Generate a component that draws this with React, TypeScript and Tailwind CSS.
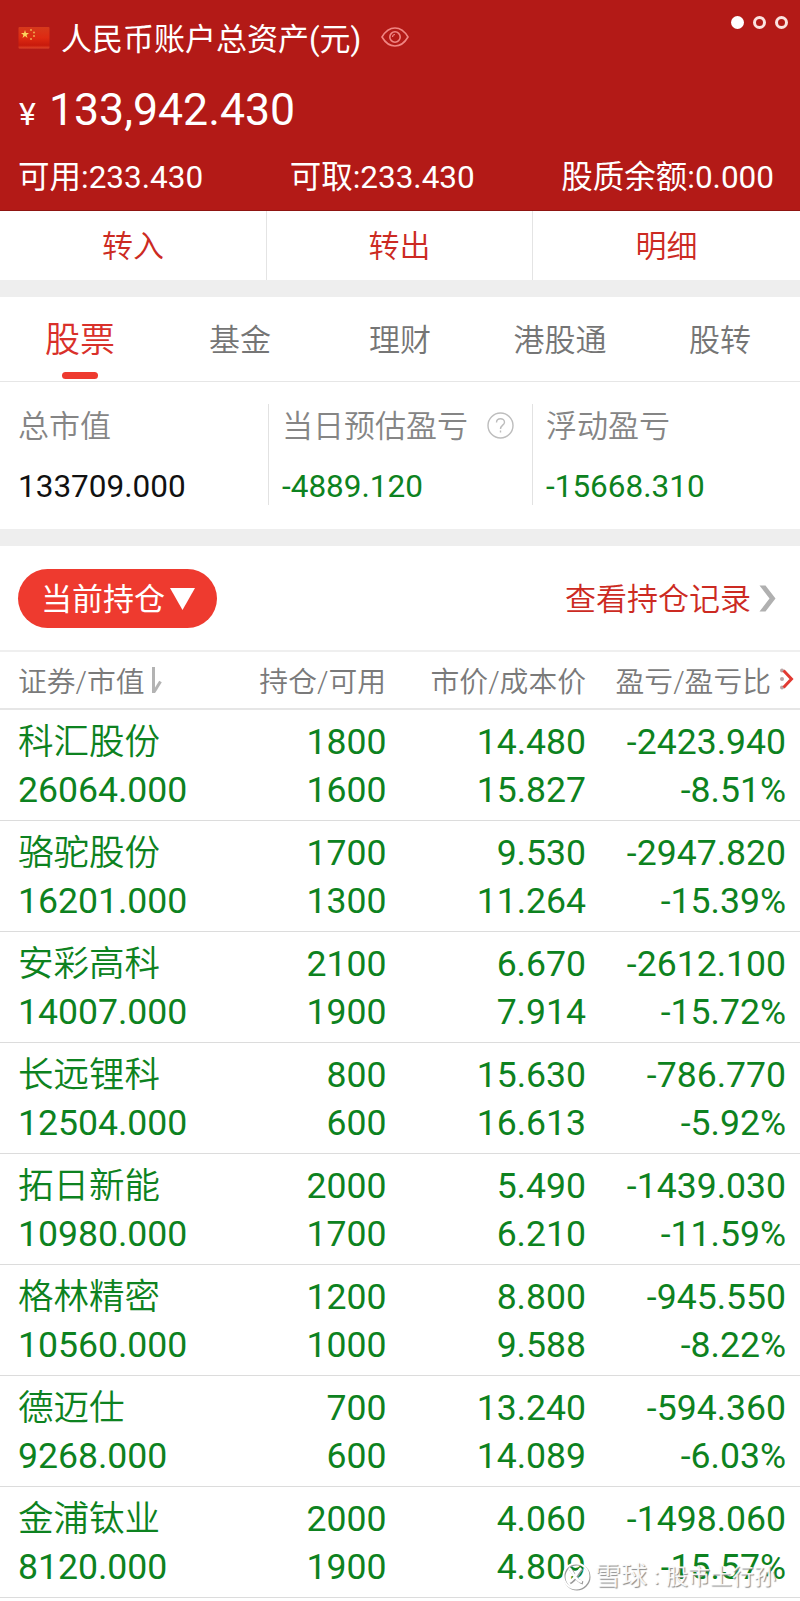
import React from "react";

const HOLDINGS = [
  { name: "科汇股份", value: "26064.000", qty: "1800", usable: "1600", price: "14.480", cost: "15.827", profit: "-2423.940", ratio: "-8.51%" },
  { name: "骆驼股份", value: "16201.000", qty: "1700", usable: "1300", price: "9.530", cost: "11.264", profit: "-2947.820", ratio: "-15.39%" },
  { name: "安彩高科", value: "14007.000", qty: "2100", usable: "1900", price: "6.670", cost: "7.914", profit: "-2612.100", ratio: "-15.72%" },
  { name: "长远锂科", value: "12504.000", qty: "800", usable: "600", price: "15.630", cost: "16.613", profit: "-786.770", ratio: "-5.92%" },
  { name: "拓日新能", value: "10980.000", qty: "2000", usable: "1700", price: "5.490", cost: "6.210", profit: "-1439.030", ratio: "-11.59%" },
  { name: "格林精密", value: "10560.000", qty: "1200", usable: "1000", price: "8.800", cost: "9.588", profit: "-945.550", ratio: "-8.22%" },
  { name: "德迈仕", value: "9268.000", qty: "700", usable: "600", price: "13.240", cost: "14.089", profit: "-594.360", ratio: "-6.03%" },
  { name: "金浦钛业", value: "8120.000", qty: "2000", usable: "1900", price: "4.060", cost: "4.809", profit: "-1498.060", ratio: "-15.57%" },
];

const TABS = ["股票", "基金", "理财", "港股通", "股转"];

function Flag() {
  return (
    <svg width="32" height="24" viewBox="0 0 32 24">
      <defs>
        <linearGradient id="flag" x1="0" y1="0" x2="0" y2="1">
          <stop offset="0" stopColor="#d63a1c" />
          <stop offset="0.5" stopColor="#de2a12" />
          <stop offset="0.85" stopColor="#c81a0c" />
          <stop offset="1" stopColor="#e0452a" />
        </linearGradient>
      </defs>
      <rect x="0.5" y="1" width="31" height="21.5" rx="1" fill="url(#flag)" />
      <path d="M7 4l1 3h3l-2.400 1.900.9 3L7 10.100l-2.500 1.800.9-3L3 7h3z" fill="#fbd35c" />
      <g fill="#eda04a">
        <circle cx="13" cy="4" r="1.100" />
        <circle cx="16" cy="6.500" r="1.100" />
        <circle cx="16" cy="10" r="1.100" />
        <circle cx="13" cy="13" r="1.100" />
      </g>
    </svg>
  );
}

function Eye() {
  return (
    <svg width="28" height="20" viewBox="0 0 28 20" fill="none" stroke="#f08683" strokeWidth="1.600">
      <path d="M1 10C4.500 4 9 1 14 1s9.500 3 13 9c-3.500 6-8 9-13 9S4.500 16 1 10z" />
      <circle cx="14" cy="10" r="5.200" />
      <path d="M11.500 10a2.500 2.500 0 0 1 2.500-2.500" strokeWidth="1.200" />
    </svg>
  );
}

function Header() {
  return (
    <header className="relative h-[211px] bg-[#b31a17] px-[18px] text-white border-b border-[#8f1512]">
      <div className="flex items-center h-[76px]">
        <Flag />
        <span className="ml-[11px] mt-[4px] text-[31px] leading-[40px]">人民币账户总资产(元)</span>
        <span className="ml-[20px] mb-[2px]">
          <Eye />
        </span>
      </div>
      <div className="flex items-baseline h-[66px] leading-[68px]">
        <span className="w-[31px] pl-px text-[32px]">¥</span>
        <span className="text-[44.600px]">133,942.430</span>
      </div>
      <div className="flex justify-between pr-[8px] pt-[16px] text-[31.500px] leading-[40px]">
        <span>可用:233.430</span>
        <span>可取:233.430</span>
        <span>股质余额:0.000</span>
      </div>
      <div className="absolute top-[16px] right-[12px] flex gap-[9px]">
        <i className="w-[13px] h-[13px] rounded-full bg-white" />
        <i className="w-[13px] h-[13px] rounded-full border-[3px] border-[#fbe3e0]" />
        <i className="w-[13px] h-[13px] rounded-full border-[3px] border-[#fbe3e0]" />
      </div>
    </header>
  );
}

function Stats() {
  return (
    <section className="flex h-[147px] pt-[22px] text-[31px] text-[#858585]">
      <div className="w-[268px] h-[101px] pl-[18px] leading-[46px]">
        <div className="font-[350]">总市值</div>
        <div className="mt-[14px] text-[31.500px] text-[#111]">133709.000</div>
      </div>
      <div className="w-[264px] h-[101px] pl-[13px] leading-[46px] border-l border-[#e2e2e2]">
        <div className="flex items-center font-[350]">
          当日预估盈亏
          <svg className="ml-[19px] mb-[3px]" width="27" height="27" viewBox="0 0 27 27" fill="none" stroke="#bdbdbd" strokeWidth="1.400">
            <circle cx="13.500" cy="13.500" r="12.500" />
            <path d="M9.500 10.500c0-5 8-5 8-.3 0 3-4 3-4 6.800" />
            <path d="M13.500 18.500v2" />
          </svg>
        </div>
        <div className="mt-[14px] text-[31.500px] text-[#0d8220]">-4889.120</div>
      </div>
      <div className="flex-1 h-[101px] pl-[13px] leading-[46px] border-l border-[#e2e2e2]">
        <div className="font-[350]">浮动盈亏</div>
        <div className="mt-[14px] text-[31.500px] text-[#0d8220]">-15668.310</div>
      </div>
    </section>
  );
}

export default function App() {
  return (
    <div className="relative w-[800px] h-[1601px] overflow-hidden bg-white font-['Roboto','Noto_Sans_CJK_SC',sans-serif]">
      <Header />

      <div className="flex h-[69px] text-[31px] leading-[71px] text-center font-[350] text-[#cc2a22]">
        <button className="w-[267px] border-r border-[#e4e4e4]">转入</button>
        <button className="w-[266px] border-r border-[#e4e4e4]">转出</button>
        <button className="flex-1">明细</button>
      </div>
      <div className="h-[17px] bg-[#eee]" />

      <nav className="flex h-[85px] border-b border-[#e6e6e6] text-[31px] text-[#757575] font-[350]">
        {TABS.map((tab, i) =>
          i === 0 ? (
            <div key={tab} className="flex flex-col items-center w-[160px] text-[35px] leading-[88px] text-[#d9302a]">
              <div className="h-[75px]">{tab}</div>
              <div className="w-[36px] h-[7px] rounded-full bg-[#ee3a2f]" />
            </div>
          ) : (
            <div key={tab} className="w-[160px] text-center leading-[88px]">
              {tab}
            </div>
          )
        )}
      </nav>

      <Stats />
      <div className="h-[17px] bg-[#eee]" />

      <div className="flex items-center justify-between h-[106px] pl-[18px] pr-[24px] border-b-2 border-[#efefef]">
        <button className="flex items-center w-[199px] h-[59px] pl-[23px] rounded-full bg-[#ee3a2f] text-[31px] text-white">
          <span className="pt-[5px]">当前持仓</span>
          <svg className="ml-[5px] mt-px" width="25" height="22" viewBox="0 0 25 22">
            <path d="M0 0h25L12.500 22z" fill="#fff" />
          </svg>
        </button>
        <div className="flex items-center text-[31px] font-[350] text-[#cc2a22]">
          <span className="pt-[5px]">查看持仓记录</span>
          <svg className="ml-[8px]" width="17" height="27" viewBox="0 0 17 27">
            <path d="M0.500 0.500h6L16.500 13.500 6.500 26.500h-6L10.500 13.500z" fill="#b0b0b0" />
          </svg>
        </div>
      </div>

      <div className="relative flex h-[58px] border-b-2 border-[#e6e6e6] text-[28.800px] leading-[60px] text-[#7a7a7a] font-[350]">
        <div className="flex w-[187px] pl-[18px] whitespace-nowrap">
          <span>证券/市值</span>
          <svg className="ml-[7px] mt-[15px] shrink-0" width="10" height="27" viewBox="0 0 10 27" fill="none" stroke="#b3b3b3">
            <path d="M1.500 0v26" strokeWidth="3" />
            <path d="M2 25L8.500 14.500" strokeWidth="3" />
          </svg>
        </div>
        <div className="w-[199px] text-right">持仓/可用</div>
        <div className="w-[200px] text-right">市价/成本价</div>
        <div className="w-[185px] text-right">盈亏/盈亏比</div>
        <svg className="ml-[8px] mt-[16px]" width="15" height="22" viewBox="0 0 15 22" fill="none">
          <g fill="#b9a3a3">
            <circle cx="3" cy="2.500" r="2" />
            <circle cx="3" cy="11" r="2" />
            <circle cx="3" cy="19.500" r="2" />
          </g>
          <path d="M4.500 2.500l8 8.500-8 8.500" stroke="#e23a32" strokeWidth="3" />
        </svg>
      </div>

      {HOLDINGS.map((h) => (
        <div key={h.name} className="flex h-[111px] pt-[8px] border-b border-[#dcdcdc] text-[35.600px] leading-[48px] text-[#0d8220]">
          <div className="w-[187px] pl-[18px] whitespace-nowrap">
            <div className="text-[35.500px] font-[350]">{h.name}</div>
            <div>{h.value}</div>
          </div>
          <div className="w-[199.500px] text-right">
            <div>{h.qty}</div>
            <div>{h.usable}</div>
          </div>
          <div className="w-[199.500px] text-right">
            <div>{h.price}</div>
            <div>{h.cost}</div>
          </div>
          <div className="w-[200px] text-right">
            <div>{h.profit}</div>
            <div>{h.ratio}</div>
          </div>
        </div>
      ))}

      {/* watermark */}
      <div className="absolute left-[562px] top-[1561px] flex items-center h-[30px] text-white/90 [text-shadow:1px_1px_1px_#888]">
        <svg width="29" height="29" viewBox="0 0 29 29" fill="none">
          <circle cx="15" cy="15" r="12.500" stroke="#999" strokeWidth="2" />
          <circle cx="14" cy="14" r="12.500" stroke="#fff" strokeWidth="2" />
          <path d="M8 7c4 3 5 12 13 14M20 7c-4 4-5 10-12 14" stroke="#999" strokeWidth="3" />
          <path d="M7 6c4 3 5 12 13 14M19 6c-4 4-5 10-12 14" stroke="#fff" strokeWidth="2.500" />
        </svg>
        <span className="ml-[4px] text-[26px]">雪球</span>
        <span className="w-[19px] text-center text-[22px]">:</span>
        <span className="text-[22px]">股市土行孙</span>
      </div>
    </div>
  );
}
